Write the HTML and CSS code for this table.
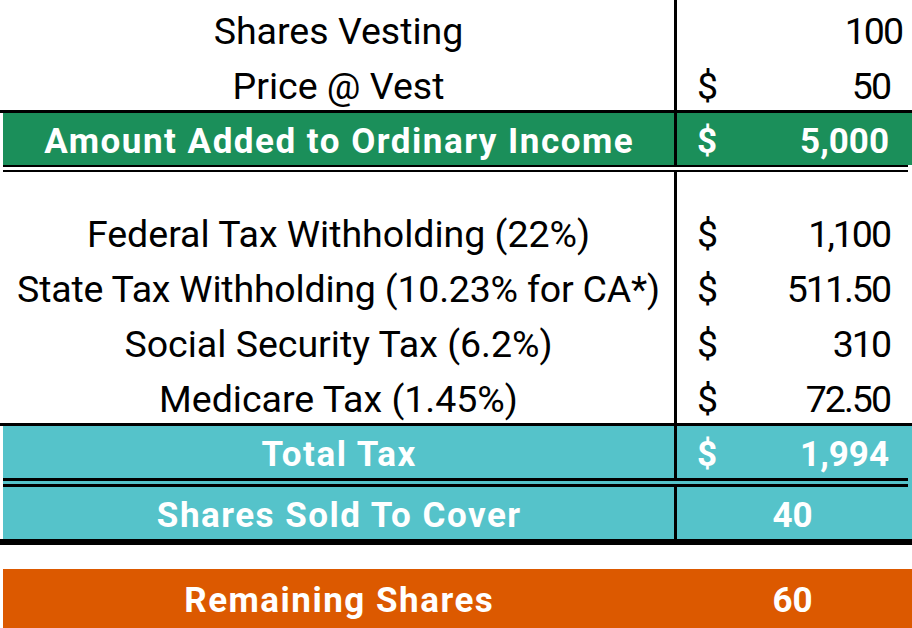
FILE: index.html
```html
<!DOCTYPE html>
<html>
<head>
<meta charset="utf-8">
<link rel="stylesheet" href="styles.css">
</head>
<body>
<div class="sheet">
  <div class="row row-std">
    <div class="label">Shares Vesting</div>
    <div class="value"><span class="num num-plain">100</span></div>
  </div>
  <div class="row row-std">
    <div class="label">Price @ Vest</div>
    <div class="value"><span class="cur">$</span><span class="num">50</span></div>
  </div>
  <div class="rule"></div>
  <div class="row row-total green">
    <div class="label">Amount Added to Ordinary Income</div>
    <div class="value"><span class="cur">$</span><span class="num">5,000</span></div>
  </div>
  <div class="double double-white"><div class="line"></div><div class="line"></div></div>
  <div class="row row-blank">
    <div class="label"></div>
    <div class="value"></div>
  </div>
  <div class="row row-std">
    <div class="label">Federal Tax Withholding (22%)</div>
    <div class="value"><span class="cur">$</span><span class="num">1,100</span></div>
  </div>
  <div class="row row-std">
    <div class="label label-tight">State Tax Withholding (10.23% for CA*)</div>
    <div class="value"><span class="cur">$</span><span class="num">511.50</span></div>
  </div>
  <div class="row row-std">
    <div class="label">Social Security Tax (6.2%)</div>
    <div class="value"><span class="cur">$</span><span class="num">310</span></div>
  </div>
  <div class="row row-std">
    <div class="label">Medicare Tax (1.45%)</div>
    <div class="value"><span class="cur">$</span><span class="num">72.50</span></div>
  </div>
  <div class="rule"></div>
  <div class="row row-total teal">
    <div class="label">Total Tax</div>
    <div class="value"><span class="cur">$</span><span class="num">1,994</span></div>
  </div>
  <div class="double double-teal"><div class="line"></div><div class="line"></div></div>
  <div class="row row-total teal row-sold">
    <div class="label">Shares Sold To Cover</div>
    <div class="value value-center"><span class="num">40</span></div>
  </div>
  <div class="rule rule-thick"></div>
  <div class="spacer"></div>
  <div class="row row-total orange row-remaining">
    <div class="label">Remaining Shares</div>
    <div class="value value-center value-noline"><span class="num">60</span></div>
  </div>
</div>
</body>
</html>
```

FILE: styles.css
```css
html, body {
  margin: 0;
  padding: 0;
  background: #ffffff;
}

.sheet {
  width: 912px;
  font-family: Roboto, "Liberation Sans", sans-serif;
  color: #000000;
  overflow: hidden;
}

.row {
  display: flex;
  margin-left: 3px;
  width: 909px;
}

.label {
  width: 671px;
  flex: none;
  text-align: center;
  line-height: 1;
  white-space: nowrap;
}

.label-tight {
  letter-spacing: -0.2px;
}

.value {
  flex: 1;
  border-left: 3px solid #000000;
  display: flex;
  justify-content: space-between;
  line-height: 1;
  white-space: nowrap;
}

.value-center {
  justify-content: center;
}

.value-noline {
  border-left-color: transparent;
}

.row-std {
  height: 55px;
  font-size: 37.5px;
}

.row-std .label,
.row-std .value {
  padding-top: 13px;
  box-sizing: border-box;
}

.row-std .cur {
  margin-left: 20px;
}

.row-std .num {
  margin-left: auto;
  margin-right: 22px;
  letter-spacing: -2px;
}

.row-std .num-plain {
  margin-right: 10px;
}

.row-blank {
  height: 31px;
}

.row-total {
  height: 52px;
  font-size: 35px;
  font-weight: 700;
  color: #ffffff;
}

.row-total .label,
.row-total .value {
  padding-top: 11px;
  box-sizing: border-box;
}

.row-total .label {
  letter-spacing: 1.5px;
  padding-left: 1.5px;
}

.row-total .cur {
  margin-left: 20px;
}

.row-total .num {
  margin-left: auto;
  margin-right: 23px;
}

.row-total .value-center .num {
  margin: 0 4px 0 0;
}

.green {
  background: #1b8f5a;
}

.teal {
  background: #55c3ca;
}

.orange {
  background: #dc5900;
}

.row-sold {
  height: 52px;
}

.row-remaining {
  height: 63px;
}

.row-remaining .label,
.row-remaining .value {
  padding-top: 14px;
}

.rule {
  height: 3px;
  background: #000000;
}

.rule-thick {
  height: 6px;
}

.double {
  margin-left: 3px;
  width: 909px;
  height: 7px;
  display: flex;
  flex-direction: column;
  justify-content: space-between;
}

.double .line {
  width: 905px;
  height: 2px;
  background: #000000;
}

.double-white {
  background: #ffffff;
}

.double-teal {
  height: 9px;
  background: #55c3ca;
}

.double-teal .line {
  height: 3px;
}

.spacer {
  height: 24px;
}
```
